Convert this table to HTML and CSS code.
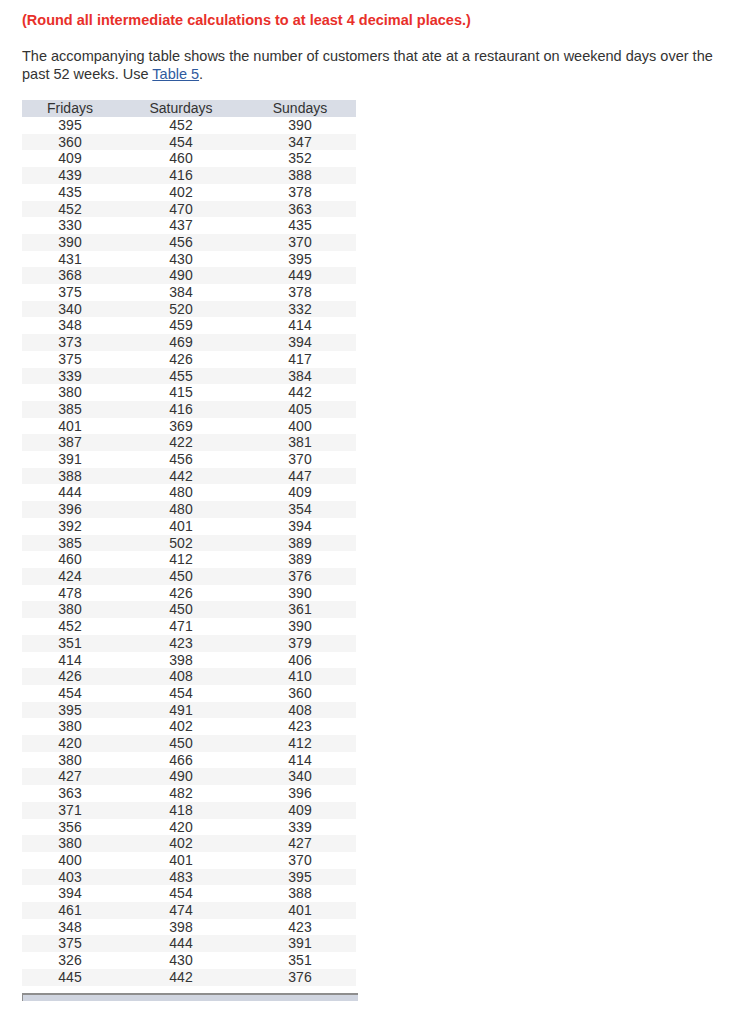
FILE: index.html
```html
<!DOCTYPE html>
<html>
<head>
<meta charset="utf-8">
<link rel="stylesheet" href="styles.css">
</head>
<body>
<div class="page">
  <p class="note">(Round all intermediate calculations to at least 4 decimal places.)</p>
  <p class="intro">The accompanying table shows the number of customers that ate at a restaurant on weekend days over the past 52 weeks. Use <a href="#" class="link">Table 5</a>.</p>
  <div class="table-wrap">
    <table class="data">
      <thead>
        <tr><th class="c1">Fridays</th><th class="c2">Saturdays</th><th class="c3">Sundays</th></tr>
      </thead>
      <tbody id="rows">
<tr><td>395</td><td>452</td><td>390</td></tr>
<tr><td>360</td><td>454</td><td>347</td></tr>
<tr><td>409</td><td>460</td><td>352</td></tr>
<tr><td>439</td><td>416</td><td>388</td></tr>
<tr><td>435</td><td>402</td><td>378</td></tr>
<tr><td>452</td><td>470</td><td>363</td></tr>
<tr><td>330</td><td>437</td><td>435</td></tr>
<tr><td>390</td><td>456</td><td>370</td></tr>
<tr><td>431</td><td>430</td><td>395</td></tr>
<tr><td>368</td><td>490</td><td>449</td></tr>
<tr><td>375</td><td>384</td><td>378</td></tr>
<tr><td>340</td><td>520</td><td>332</td></tr>
<tr><td>348</td><td>459</td><td>414</td></tr>
<tr><td>373</td><td>469</td><td>394</td></tr>
<tr><td>375</td><td>426</td><td>417</td></tr>
<tr><td>339</td><td>455</td><td>384</td></tr>
<tr><td>380</td><td>415</td><td>442</td></tr>
<tr><td>385</td><td>416</td><td>405</td></tr>
<tr><td>401</td><td>369</td><td>400</td></tr>
<tr><td>387</td><td>422</td><td>381</td></tr>
<tr><td>391</td><td>456</td><td>370</td></tr>
<tr><td>388</td><td>442</td><td>447</td></tr>
<tr><td>444</td><td>480</td><td>409</td></tr>
<tr><td>396</td><td>480</td><td>354</td></tr>
<tr><td>392</td><td>401</td><td>394</td></tr>
<tr><td>385</td><td>502</td><td>389</td></tr>
<tr><td>460</td><td>412</td><td>389</td></tr>
<tr><td>424</td><td>450</td><td>376</td></tr>
<tr><td>478</td><td>426</td><td>390</td></tr>
<tr><td>380</td><td>450</td><td>361</td></tr>
<tr><td>452</td><td>471</td><td>390</td></tr>
<tr><td>351</td><td>423</td><td>379</td></tr>
<tr><td>414</td><td>398</td><td>406</td></tr>
<tr><td>426</td><td>408</td><td>410</td></tr>
<tr><td>454</td><td>454</td><td>360</td></tr>
<tr><td>395</td><td>491</td><td>408</td></tr>
<tr><td>380</td><td>402</td><td>423</td></tr>
<tr><td>420</td><td>450</td><td>412</td></tr>
<tr><td>380</td><td>466</td><td>414</td></tr>
<tr><td>427</td><td>490</td><td>340</td></tr>
<tr><td>363</td><td>482</td><td>396</td></tr>
<tr><td>371</td><td>418</td><td>409</td></tr>
<tr><td>356</td><td>420</td><td>339</td></tr>
<tr><td>380</td><td>402</td><td>427</td></tr>
<tr><td>400</td><td>401</td><td>370</td></tr>
<tr><td>403</td><td>483</td><td>395</td></tr>
<tr><td>394</td><td>454</td><td>388</td></tr>
<tr><td>461</td><td>474</td><td>401</td></tr>
<tr><td>348</td><td>398</td><td>423</td></tr>
<tr><td>375</td><td>444</td><td>391</td></tr>
<tr><td>326</td><td>430</td><td>351</td></tr>
<tr><td>445</td><td>442</td><td>376</td></tr>
      </tbody>
    </table>
    <div class="scrollbar"></div>
  </div>
</div>
</body>
</html>
```

FILE: styles.css
```css
html, body {
  margin: 0;
  padding: 0;
  background: #ffffff;
}
.page {
  padding: 11px 22px 0 22px;
  font-family: "Liberation Sans", Arial, sans-serif;
  color: #333333;
}
.note {
  margin: 0;
  font-size: 14.5px;
  line-height: 18px;
  font-weight: bold;
  color: #e8302a;
}
.intro {
  margin: 18px 0 0 0;
  font-size: 14.5px;
  line-height: 18px;
  color: #333333;
}
.link {
  color: #2f5a9e;
  text-decoration: underline;
}
.table-wrap {
  margin-top: 17px;
  width: 336px;
}
.data {
  border-collapse: collapse;
  width: 334px;
  font-size: 14px;
}
.data th {
  background: #d9dde6;
  font-weight: normal;
  color: #333333;
  height: 17px;
  line-height: 17px;
  padding: 0;
  text-align: center;
}
.data td {
  height: 16.7px;
  line-height: 16.7px;
  padding: 0;
  text-align: center;
  color: #333333;
}
.c1 { width: 96px; }
.c2 { width: 126px; }
.c3 { width: 112px; }
.data tbody tr:nth-child(even) td {
  background: #f5f5f5;
}
.scrollbar {
  margin-top: 7px;
  height: 6px;
  background: #d0d5e0;
  border-top: 2px solid #8e8e8e;
  border-left: 1px solid #8e8e8e;
}
```
